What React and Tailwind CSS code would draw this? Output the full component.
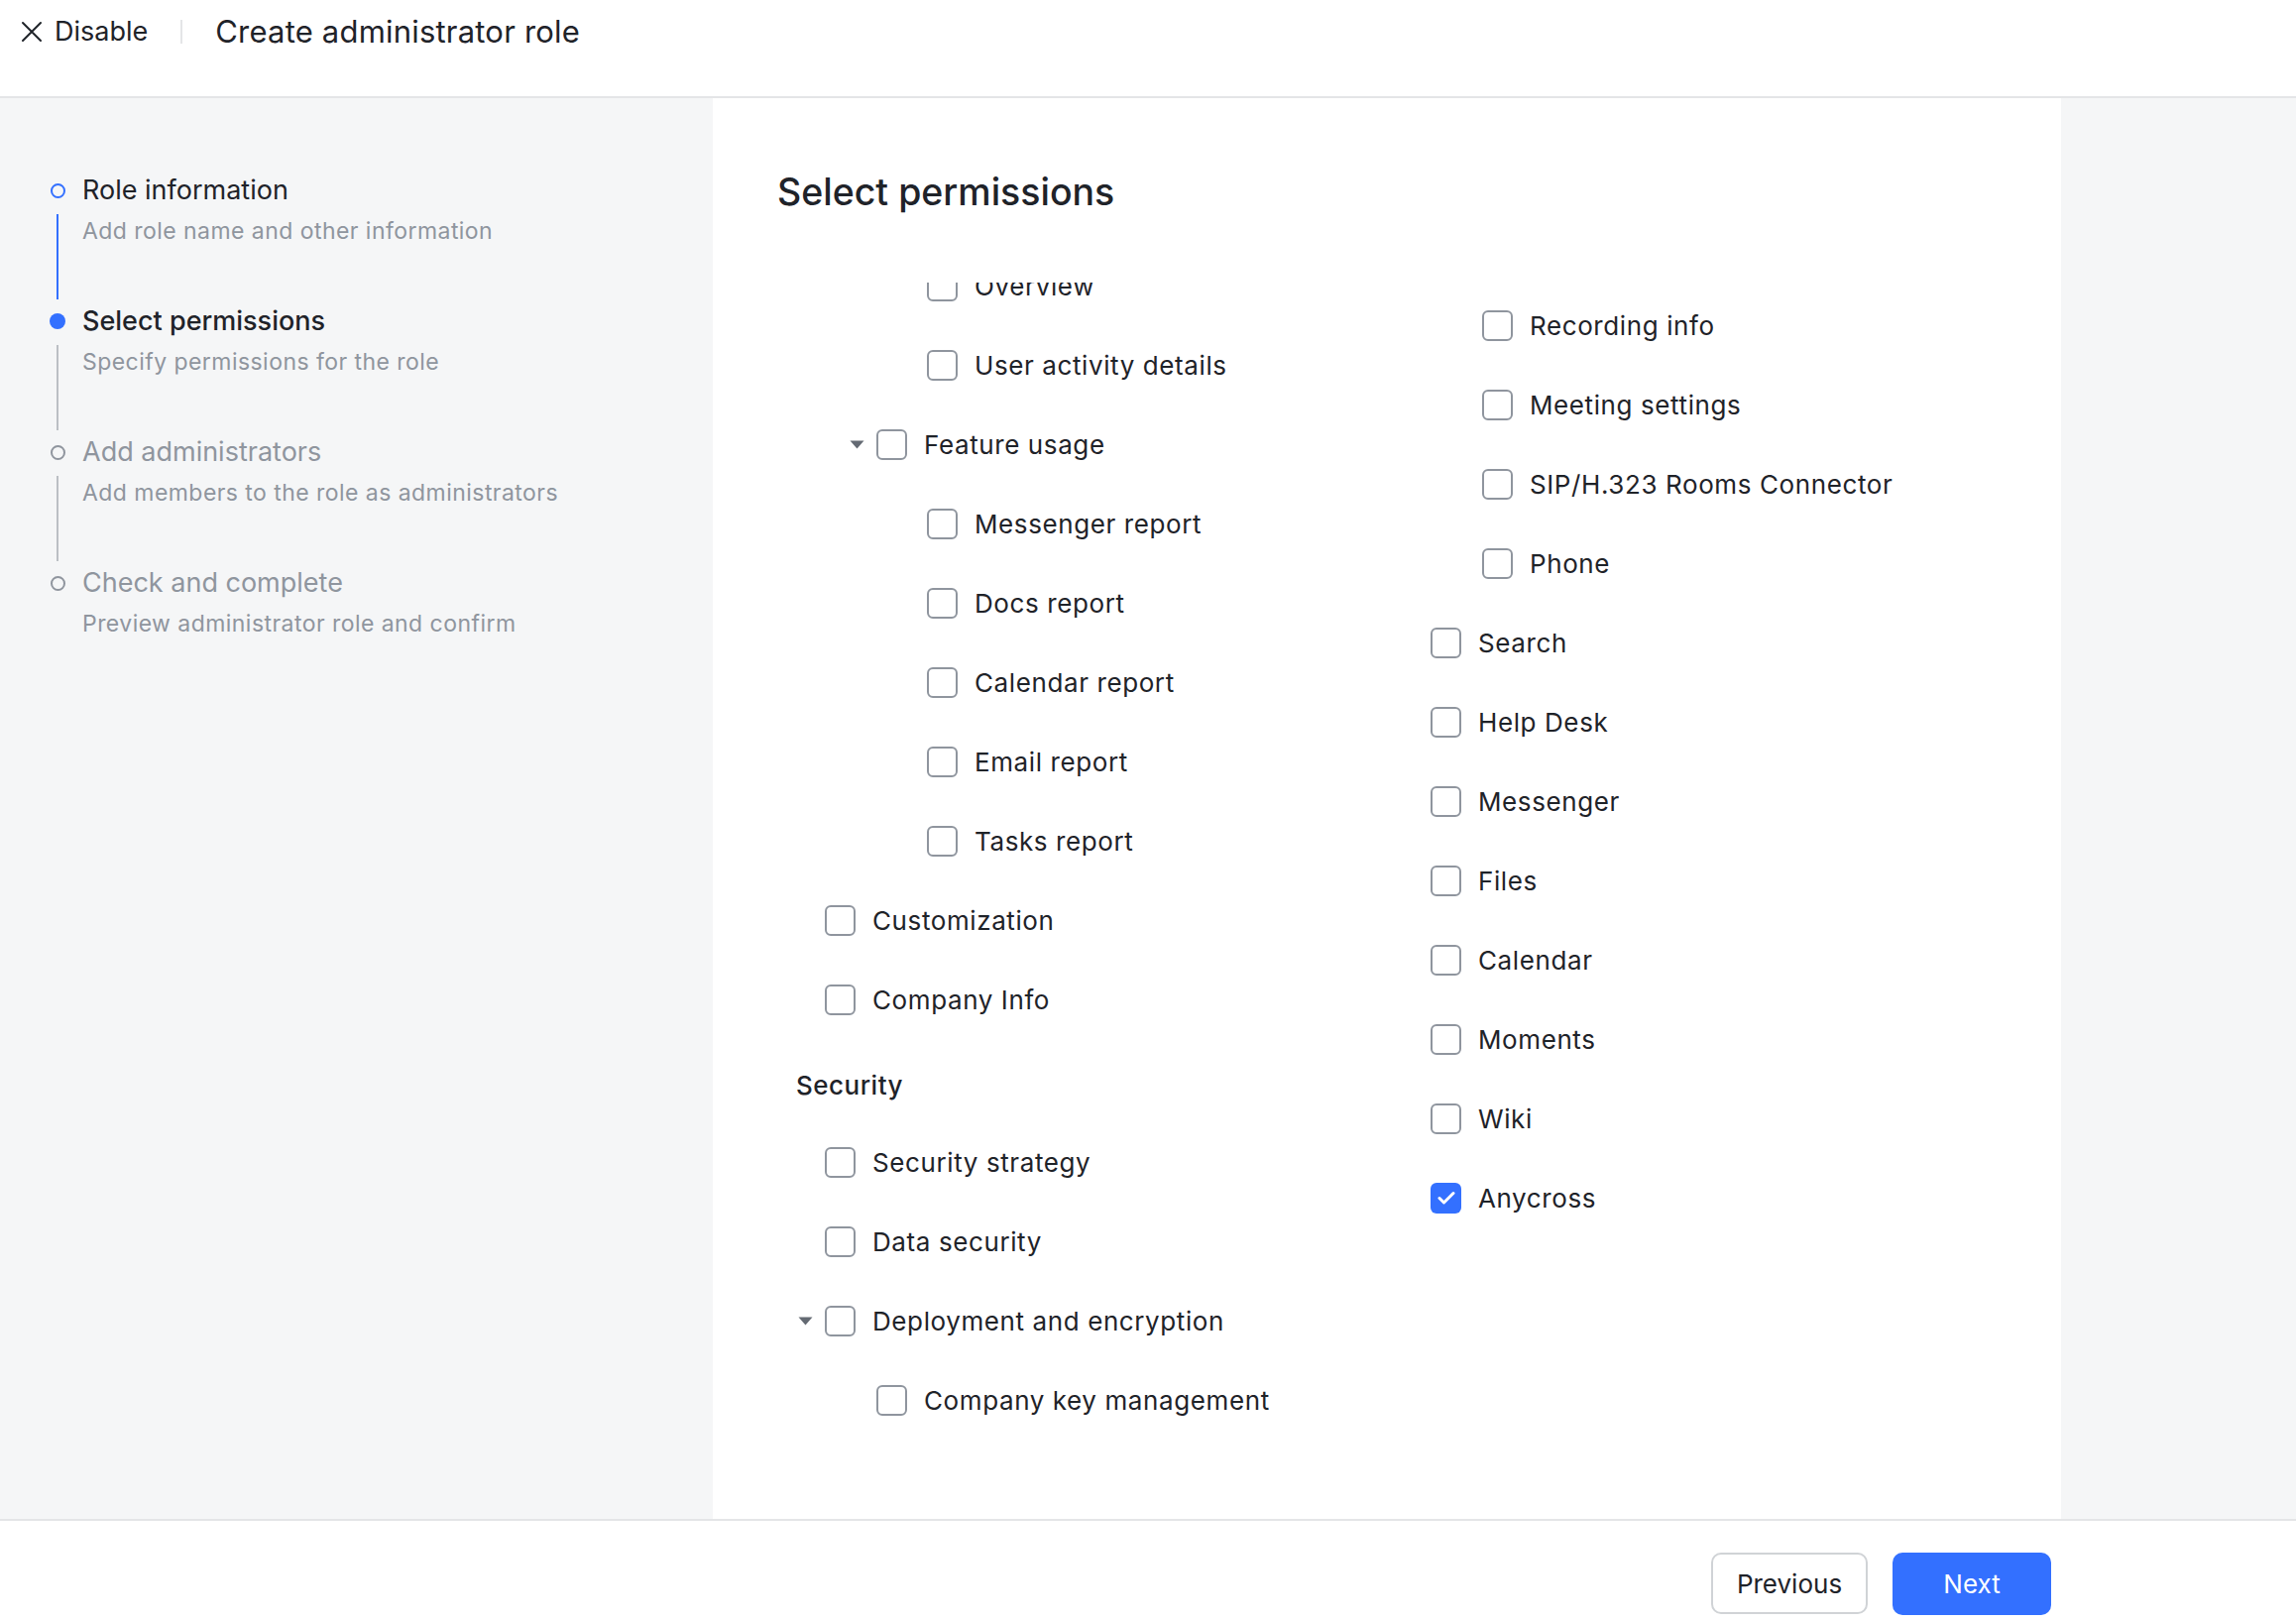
const steps = [
    { title: 'Role information', desc: 'Add role name and other information', state: 'done' },
    { title: 'Select permissions', desc: 'Specify permissions for the role', state: 'active' },
    { title: 'Add administrators', desc: 'Add members to the role as administrators', state: 'todo' },
    { title: 'Check and complete', desc: 'Preview administrator role and confirm', state: 'todo' },
];

// level: 1, 2, 3 -> indent. caret: expandable node
const leftTree = [
    { label: 'Overview', level: 3 },
    { label: 'User activity details', level: 3 },
    { label: 'Feature usage', level: 2, caret: true },
    { label: 'Messenger report', level: 3 },
    { label: 'Docs report', level: 3 },
    { label: 'Calendar report', level: 3 },
    { label: 'Email report', level: 3 },
    { label: 'Tasks report', level: 3 },
    { label: 'Customization', level: 1 },
    { label: 'Company Info', level: 1 },
    { label: 'Security', header: true },
    { label: 'Security strategy', level: 1 },
    { label: 'Data security', level: 1 },
    { label: 'Deployment and encryption', level: 1, caret: true },
    { label: 'Company key management', level: 2 },
];

const rightTree = [
    { label: 'Recording info', level: 2 },
    { label: 'Meeting settings', level: 2 },
    { label: 'SIP/H.323 Rooms Connector', level: 2 },
    { label: 'Phone', level: 2 },
    { label: 'Search', level: 1 },
    { label: 'Help Desk', level: 1 },
    { label: 'Messenger', level: 1 },
    { label: 'Files', level: 1 },
    { label: 'Calendar', level: 1 },
    { label: 'Moments', level: 1 },
    { label: 'Wiki', level: 1 },
    { label: 'Anycross', level: 1, checked: true },
];

const indent = {
    1: 'pl-[2px]',
    2: 'pl-[54px]',
    3: 'pl-[105px]',
};

const Checkbox = ({ checked }) => (
    checked
        ? <span className="w-[31px] h-[31px] rounded-[6px] bg-[#3370ff] flex items-center justify-center shrink-0">
            <svg width="18" height="14" viewBox="0 0 18 14" fill="none">
                <path d="M2 7.5l4.5 4.5L16 2.5" stroke="#ffffff" strokeWidth="3" strokeLinecap="round" strokeLinejoin="round" />
            </svg>
        </span>
        : <span className="w-[31px] h-[31px] rounded-[6px] border-2 border-[#8f959e] bg-white shrink-0"></span>
);

const TreeRow = ({ item }) => {
    if (item.header) {
        return (
            <div className="h-[84px] pt-[8px] flex items-center text-[26px] tracking-[0.5px] font-medium text-[#1f2329]">
                {item.label}
            </div>
        );
    }
    return (
        <div className={`h-[80px] flex items-center ${indent[item.level]}`}>
            <span className="w-[27px] shrink-0 flex items-center">
                {item.caret &&
                    <svg width="15" height="9" viewBox="0 0 15 9">
                        <path d="M0.5 0.5h14L7.5 8.5z" fill="#646a73" />
                    </svg>}
            </span>
            <Checkbox checked={item.checked} />
            <span className="ml-[17px] text-[26px] tracking-[0.6px] text-[#1f2329] whitespace-nowrap">{item.label}</span>
        </div>
    );
};

const App = () => {
    return (
        <div className="w-[2316px] h-[1636px] flex flex-col overflow-hidden bg-white font-['Inter','Noto_Sans',sans-serif] antialiased">

            {/* header */}
            <div className="h-[99px] shrink-0 border-b-2 border-[#e4e5e7] bg-white">
                <div className="h-[64px] flex items-center pl-[21px]">
                    <svg width="22" height="22" viewBox="0 0 22 22" fill="none">
                        <path d="M2 2l18 18M20 2L2 20" stroke="#1f2329" strokeWidth="2" strokeLinecap="round" />
                    </svg>
                    <span className="ml-[12px] text-[27px] text-[#1f2329]">Disable</span>
                    <span className="ml-[33px] w-[2px] h-[24px] bg-[#e4e5e7]"></span>
                    <span className="ml-[33px] text-[31px] tracking-[0.2px] text-[#1f2329]">Create administrator role</span>
                </div>
            </div>

            {/* body */}
            <div className="flex-1 min-h-0 flex">

                {/* steps */}
                <div className="w-[719px] shrink-0 bg-[#f5f6f7] pt-[75px] pl-[50px]">
                    {steps.map((s, i) => (
                        <div key={s.title} className="h-[132px] flex">
                            <div className="w-[16px] flex flex-col items-center">
                                <div className="h-[36px] flex items-center">
                                    {s.state === 'done' && <span className="w-[15px] h-[15px] rounded-full border-2 border-[#3370ff]"></span>}
                                    {s.state === 'active' && <span className="w-[16px] h-[16px] rounded-full bg-[#3370ff]"></span>}
                                    {s.state === 'todo' && <span className="w-[15px] h-[15px] rounded-full border-2 border-[#8f959e]"></span>}
                                </div>
                                {i < steps.length - 1 &&
                                    <span className={`mt-[6px] h-[86px] w-[2px] ${s.state === 'done' ? 'bg-[#3370ff]' : 'bg-[#bbbfc4]'}`}></span>}
                            </div>
                            <div className="ml-[17px]">
                                <div className={`h-[36px] leading-[36px] text-[27px] ${s.state === 'todo' ? 'text-[#8f959e]' : 'text-[#1f2329]'} ${s.state === 'active' ? 'font-medium' : ''}`}>
                                    {s.title}
                                </div>
                                <div className="mt-[7px] leading-[32px] text-[23px] tracking-[0.45px] text-[#8f959e]">
                                    {s.desc}
                                </div>
                            </div>
                        </div>
                    ))}
                </div>

                {/* permissions */}
                <div className="w-[1360px] shrink-0 bg-white pt-[71px] pl-[65px] flex flex-col">
                    <h2 className="h-[48px] leading-[48px] text-[37.5px] font-medium text-[#1f2329]">Select permissions</h2>

                    <div className="mt-[67px] ml-[19px] flex-1 min-h-0 overflow-hidden flex">
                        <div className="w-[611px] shrink-0 -mt-[37px]">
                            {leftTree.map(item => <TreeRow key={item.label} item={item} />)}
                        </div>
                        <div className="flex-1 mt-[3px]">
                            {rightTree.map(item => <TreeRow key={item.label} item={item} />)}
                        </div>
                    </div>
                </div>

                <div className="flex-1 bg-[#f5f6f7]"></div>
            </div>

            {/* footer */}
            <div className="h-[104px] shrink-0 border-t-2 border-[#e4e5e7] bg-white flex justify-end items-start pt-[32px] pr-[247px]">
                <button className="w-[158px] h-[62px] rounded-[10px] border-2 border-[#d0d3d6] bg-white text-[26px] text-[#1f2329]">
                    Previous
                </button>
                <button className="ml-[25px] w-[160px] h-[63px] rounded-[10px] bg-[#3370ff] text-[26px] text-white">
                    Next
                </button>
            </div>
        </div>
    );
};

export default App;
